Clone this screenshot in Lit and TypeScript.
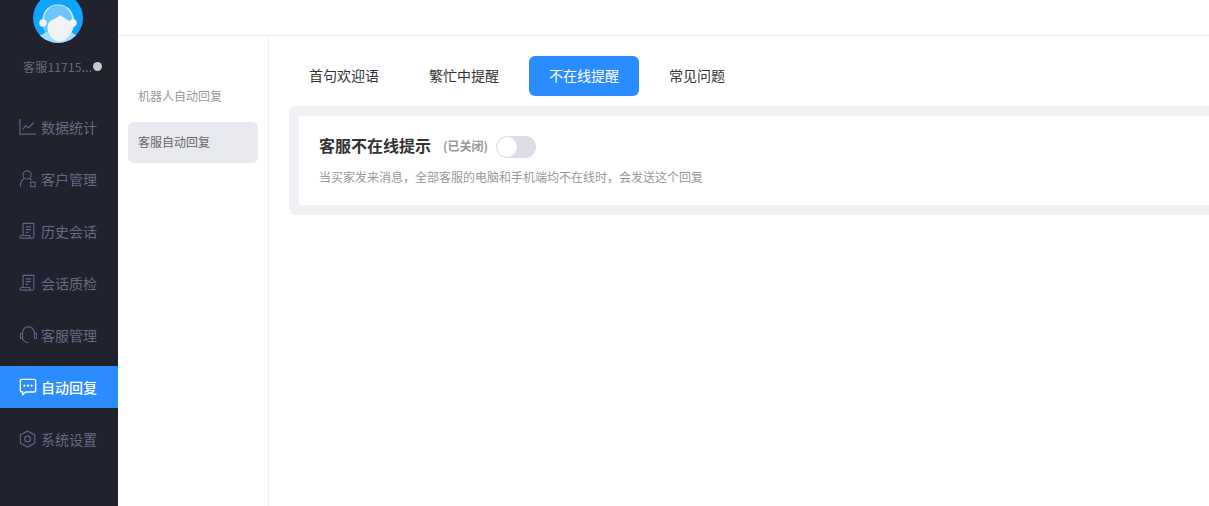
import { css, html, LitElement, svg } from "lit";
import { customElement, state } from "lit/decorators.js";

const icons = {
  chart: svg`<path d="M1 1v17h18"/><path d="M4 13l3.500-4.500 3 2.500L16.500 5"/>`,
  user: svg`<circle cx="9" cy="5.500" r="4.500"/><path d="M1.500 18.500c0-4.500 1.500-7.500 4.300-9M12 9.500c.8.500 1.500 1.100 2 1.800"/><rect x="13" y="13.500" width="5" height="5"/>`,
  doc: svg`<path d="M4.500 15V1.500h12V16c0 1.200-.7 2-1.800 2H3c-1.200 0-2-.7-2-1.500 0-1 .8-1.500 2-1.500h9v3"/><path d="M7.500 5.500h6M7.500 8.500h6M7.500 11.500h3"/>`,
  headset: svg`<path d="M4 8C4.200 3.800 6.800 1 10.500 1S16.800 3.800 17 8M4 14c.8 2.500 3 4.200 6.500 4.500"/><rect x="1.500" y="8" width="2.500" height="6" rx="1.200"/><rect x="17" y="8" width="2.500" height="6" rx="1.200"/>`,
  chat: svg`<path d="M3.500 1.500h13a2 2 0 0 1 2 2v10a2 2 0 0 1-2 2H7.500l-3.500 3v-3h-.500a2 2 0 0 1-2-2v-10a2 2 0 0 1 2-2z"/><circle class="fill" cx="6" cy="8.500" r="1.200"/><circle class="fill" cx="10" cy="8.500" r="1.200"/><circle class="fill" cx="14" cy="8.500" r="1.200"/>`,
  gear: svg`<path d="M9.500 1l8 4.500v9l-8 4.500-8-4.500v-9z"/><circle cx="9.500" cy="10" r="3.200"/>`,
};

type IconName = keyof typeof icons;

const navItems: { label: string; icon: IconName }[] = [
  { label: "数据统计", icon: "chart" },
  { label: "客户管理", icon: "user" },
  { label: "历史会话", icon: "doc" },
  { label: "会话质检", icon: "doc" },
  { label: "客服管理", icon: "headset" },
  { label: "自动回复", icon: "chat" },
  { label: "系统设置", icon: "gear" },
];

const tabs = ["首句欢迎语", "繁忙中提醒", "不在线提醒", "常见问题"];

@customElement("app-root")
class AppRoot extends LitElement {
  @state() private activeNav = "自动回复";

  @state() private activeTab = "不在线提醒";

  @state() private online = false;

  private renderAvatar() {
    return html`
      <svg class="avatar" viewBox="0 0 50 50">
        <defs>
          <clipPath id="disc"><circle cx="25" cy="25" r="25" /></clipPath>
        </defs>
        <g clip-path="url(#disc)">
          <rect width="50" height="50" fill="#0ea5fd" />
          <circle cx="25.500" cy="29" r="16.500" fill="#6cc6fb" />
          <path d="M0 50V43c6 0 9-1 13-4h25c4 3 7 4 12 4v7z" fill="#a5dcfd" />
          <path
            d="M14.500 34C14.500 27 21 27 27.500 22 31 26 39 27 39 34c0 8-6 14.500-12 14.500S14.500 42 14.500 34z"
            fill="#f3f3f5"
          />
          <path
            d="M10 30C10 18 16 12 25 12s15 6 15 18c0 8-4 15-13 18"
            fill="none"
            stroke="#d8f0ff"
            stroke-width="1.200"
          />
          <circle cx="10" cy="30" r="3.700" fill="#f3f3f5" />
          <circle cx="40" cy="30" r="3.700" fill="#f3f3f5" />
        </g>
      </svg>
    `;
  }

  protected render() {
    return html`
      <aside class="sidebar">
        ${this.renderAvatar()}
        <div class="agent">
          <span class="agent-name">客服11715...</span>
          <span class="dot"></span>
        </div>
        <nav class="nav">
          ${navItems.map(
            (item) => html`
              <div
                class="nav-item ${item.label === this.activeNav ? "active" : ""}"
                @click=${() => (this.activeNav = item.label)}
              >
                <svg class="nav-icon" viewBox="0 0 20 20">
                  ${icons[item.icon]}
                </svg>
                <span>${item.label}</span>
              </div>
            `,
          )}
        </nav>
      </aside>
      <div class="main">
        <header class="topbar"></header>
        <div class="body">
          <div class="subnav">
            <div class="subnav-title">机器人自动回复</div>
            <div class="subnav-item">客服自动回复</div>
          </div>
          <section class="content">
            <div class="tabs">
              ${tabs.map(
                (tab) => html`
                  <div
                    class="tab ${tab === this.activeTab ? "active" : ""}"
                    @click=${() => (this.activeTab = tab)}
                  >
                    ${tab}
                  </div>
                `,
              )}
            </div>
            <div class="panel">
              <div class="card">
                <div class="card-head">
                  <span class="card-title">客服不在线提示</span>
                  <span class="card-state">(已关闭)</span>
                  <button
                    class="switch ${this.online ? "on" : ""}"
                    @click=${() => (this.online = !this.online)}
                  >
                    <span class="knob"></span>
                  </button>
                </div>
                <div class="card-hint">
                  当买家发来消息，全部客服的电脑和手机端均不在线时，会发送这个回复
                </div>
              </div>
            </div>
          </section>
        </div>
      </div>
    `;
  }

  static styles = css`
    :host {
      display: flex;
      height: 506px;
      overflow: hidden;
      background: #fff;
      font-family: "Noto Sans CJK SC", "Noto Sans", sans-serif;
      font-size: 14px;
    }

    .sidebar {
      flex: 0 0 118px;
      background: #20222e;
      display: flex;
      flex-direction: column;
      align-items: center;
    }

    .avatar {
      flex: none;
      width: 50px;
      height: 50px;
      margin-top: -7px;
      margin-right: 2px;
    }

    .agent {
      align-self: stretch;
      display: flex;
      align-items: center;
      height: 18px;
      margin-top: 14px;
      padding-left: 23px;
      color: #666a80;
      font-size: 12px;
    }

    .agent-name {
      width: 70px;
      white-space: nowrap;
      letter-spacing: 0.2px;
    }

    .dot {
      width: 9px;
      height: 9px;
      border-radius: 50%;
      background: #c9c9c9;
    }

    .nav {
      align-self: stretch;
      display: flex;
      flex-direction: column;
      gap: 10px;
      margin-top: 31px;
    }

    .nav-item {
      display: flex;
      align-items: center;
      gap: 4px;
      height: 42px;
      padding-left: 19px;
      color: #666a80;
      cursor: pointer;
    }

    .nav-item.active {
      background: #2a8cff;
      color: #fff;
      font-weight: 500;
    }

    .nav-icon {
      flex: none;
      width: 18px;
      height: 18px;
      fill: none;
      stroke: #5c6488;
      stroke-width: 1.300;
    }

    .nav-item.active .nav-icon {
      stroke: #fff;
      stroke-width: 1.600;
    }

    .nav-item.active .fill {
      fill: #fff;
      stroke: none;
    }

    .main {
      flex: 1;
      min-width: 0;
      display: flex;
      flex-direction: column;
    }

    .topbar {
      flex: 0 0 36px;
      box-sizing: border-box;
      border-bottom: 1px solid #e9e9ee;
    }

    .body {
      flex: 1;
      display: flex;
    }

    .subnav {
      flex: 0 0 151px;
      box-sizing: border-box;
      border-right: 1px solid #eeeef2;
      padding: 50px 10px 0;
      font-size: 12px;
    }

    .subnav-title {
      height: 20px;
      line-height: 20px;
      padding-left: 10px;
      color: #999;
    }

    .subnav-item {
      height: 41px;
      line-height: 39px;
      margin-top: 16px;
      padding-left: 10px;
      border-radius: 6px;
      background: #e8e9ee;
      color: #666;
    }

    .content {
      flex: 1;
      min-width: 0;
      padding: 20px 0 0 20px;
    }

    .tabs {
      display: flex;
      gap: 10px;
    }

    .tab {
      width: 110px;
      height: 40px;
      line-height: 38px;
      text-align: center;
      border-radius: 6px;
      color: #333;
      cursor: pointer;
    }

    .tab:last-child {
      width: 96px;
    }

    .tab.active {
      background: #2a8cff;
      color: #fff;
    }

    .panel {
      margin: 10px -12px 0 0;
      padding: 10px;
      border-radius: 6px;
      background: #f0f0f5;
    }

    .card {
      height: 89px;
      box-sizing: border-box;
      padding: 20px;
      background: #fff;
    }

    .card-head {
      display: flex;
      align-items: center;
      height: 22px;
    }

    .card-title {
      margin-bottom: 4px;
      font-size: 16px;
      font-weight: 700;
      color: #333;
    }

    .card-state {
      margin: 0 0 3px 12px;
      font-size: 12px;
      font-weight: 700;
      color: #999;
    }

    .switch {
      position: relative;
      width: 40px;
      height: 22px;
      margin-left: 8px;
      padding: 0;
      border: none;
      border-radius: 11px;
      background: #dcdde6;
      cursor: pointer;
    }

    .switch.on {
      background: #2a8cff;
    }

    .knob {
      position: absolute;
      top: 1px;
      left: 1px;
      width: 20px;
      height: 20px;
      border-radius: 50%;
      background: #fff;
    }

    .switch.on .knob {
      left: 19px;
    }

    .card-hint {
      margin-top: 10px;
      line-height: 18px;
      font-size: 12px;
      color: #999;
    }
  `;
}

declare global {
  interface HTMLElementTagNameMap {
    "app-root": AppRoot;
  }
}
